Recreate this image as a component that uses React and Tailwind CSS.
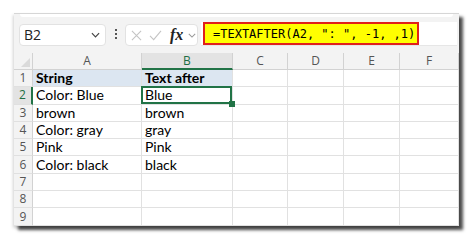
import React from "react";

const cols = [
  { w: "w-[109px]", label: "A" },
  { w: "w-[91px]", label: "B" },
  { w: "w-[55px]", label: "C" },
  { w: "w-[56px]", label: "D" },
  { w: "w-[56px]", label: "E" },
  { w: "flex-1", label: "F" },
];

const data = [
  ["String", "Text after"],
  ["Color: Blue", "Blue"],
  ["brown", "brown"],
  ["Color: gray", "gray"],
  ["Pink", "Pink"],
  ["Color: black", "black"],
  ["", ""],
  ["", ""],
  ["", ""],
];

const cellFont = { fontFamily: "Lato, 'Open Sans', sans-serif" };
const uiFont = { fontFamily: "'Open Sans', 'Noto Sans', sans-serif" };

function Chevron({ className }) {
  return (
    <svg viewBox="0 0 10 6" className={className} fill="none" stroke="currentColor" strokeWidth="1.3">
      <path d="M1 1l4 4 4-4" />
    </svg>
  );
}

export default function App() {
  return (
    <div className="w-[474px] h-[243px] bg-white pt-[13px] pl-[14px] overflow-hidden">
      <div className="w-[445px] h-[213px] bg-[#f3f3f3] flex flex-col border-t border-[#d6d6d6] shadow-[4px_4px_3px_rgba(0,0,0,0.7),-1px_2px_3px_rgba(0,0,0,0.18)]">
        {/* top strip */}
        <div className="h-[3px] px-[6px]">
          <div className="h-full bg-white rounded-b-[6px]" />
        </div>
        {/* formula bar */}
        <div className="h-[36px] flex items-start pl-[5px]">
          <div className="mt-[7px] w-[87px] h-[22px] bg-white rounded-[4px] border border-[#e2e2e2] flex items-center justify-between pl-[4px] pr-[5px]">
            <span className="text-[14px] text-[#222] leading-none" style={uiFont}>B2</span>
            <Chevron className="w-[9px] h-[6px] text-[#444]" />
          </div>
          <div className="mt-[10px] w-[19px] flex flex-col items-center gap-[2px] pt-[2px]">
            <span className="w-[2px] h-[2px] bg-[#555]" />
            <span className="w-[2px] h-[2px] bg-[#555]" />
            <span className="w-[2px] h-[2px] bg-[#555]" />
          </div>
          <div className="mt-[7px] w-[73px] h-[22px] bg-white rounded-[4px] border border-[#e2e2e2] flex items-center pl-[5px]">
            <svg viewBox="0 0 12 12" className="w-[11px] h-[11px] text-[#c4c4c4]" fill="none" stroke="currentColor" strokeWidth="1.2">
              <path d="M1 1l10 10M11 1L1 11" />
            </svg>
            <svg viewBox="0 0 14 12" className="ml-[7px] w-[13px] h-[11px] text-[#c4c4c4]" fill="none" stroke="currentColor" strokeWidth="1.2">
              <path d="M1 6.5l4 4L13 1" />
            </svg>
            <span className="ml-[8px] text-[16px] italic font-semibold text-[#222] leading-none" style={{ fontFamily: "'Liberation Serif', serif" }}>fx</span>
            <Chevron className="ml-[5px] w-[8px] h-[5px] text-[#999]" />
          </div>
          <div className="mt-[5px] ml-[3px] w-[256px] h-[24px] bg-white border-b border-[#e6e6e6] flex items-start pl-[2px]">
            <div className="w-[216px] h-[23px] bg-[#ffff00] border-2 border-[#e0201b] flex items-center pl-[8px]">
              <span className="text-[12px] text-black leading-none whitespace-pre" style={{ fontFamily: "'DejaVu Sans Mono', 'Liberation Mono', monospace" }}>
                =TEXTAFTER(A2, ": ", -1, ,1)
              </span>
            </div>
          </div>
        </div>
        {/* grid */}
        <div className="flex-1 flex flex-col bg-white" style={cellFont}>
          {/* header */}
          <div className="h-[17px] flex bg-[#f3f3f3]">
            <div className="w-[19px] relative border-r border-b border-[#d2d2d2]">
              <svg viewBox="0 0 10 10" className="absolute right-[2px] bottom-[2px] w-[9px] h-[9px]">
                <path d="M10 0v10H0z" fill="#dadada" />
              </svg>
            </div>
            {cols.map((c) => {
              const sel = c.label === "B";
              return (
                <div
                  key={c.label}
                  className={`${c.w} flex items-center justify-center text-[12px] leading-none ${
                    sel
                      ? "bg-[#e3e3e3] text-[#1e6e43] border-b-2 border-[#217346] border-r border-r-[#d2d2d2]"
                      : "text-[#555] border-r border-b border-[#d2d2d2]"
                  }`}
                  style={uiFont}
                >
                  {c.label}
                </div>
              );
            })}
          </div>
          {data.map((row, i) => {
            const r = i + 1;
            const sel = r === 2;
            return (
              <div key={r} className={`h-[17.3px] flex ${sel ? "relative z-10" : ""}`}>
                <div
                  className={`w-[19px] flex items-center justify-center text-[12px] leading-none border-b border-[#e0e0e0] ${
                    sel
                      ? "bg-[#e3e3e3] text-[#1e6e43] border-r-2 border-r-[#217346]"
                      : "bg-[#f3f3f3] text-[#555] border-r border-r-[#d2d2d2]"
                  }`}
                  style={uiFont}
                >
                  {r}
                </div>
                {cols.map((c, j) => {
                  const text = j < 2 ? row[j] : "";
                  const head = r === 1 && j < 2;
                  const active = r === 2 && j === 1;
                  return (
                    <div
                      key={c.label}
                      className={`${c.w} relative flex items-center pl-[3px] text-[14px] leading-none text-black border-r border-b border-[#e1e1e1] ${
                        head ? "bg-[#dce6f1] font-bold" : ""
                      } ${active ? "z-20" : ""}`}
                    >
                      {text}
                      {active && (
                        <>
                          <div className="absolute -left-[1px] -top-[1px] right-0 bottom-0 border-2 border-[#217346]" />
                          <div className="absolute -right-[3px] -bottom-[3px] w-[6px] h-[6px] bg-[#217346]" />
                        </>
                      )}
                    </div>
                  );
                })}
              </div>
            );
          })}
        </div>
      </div>
    </div>
  );
}
